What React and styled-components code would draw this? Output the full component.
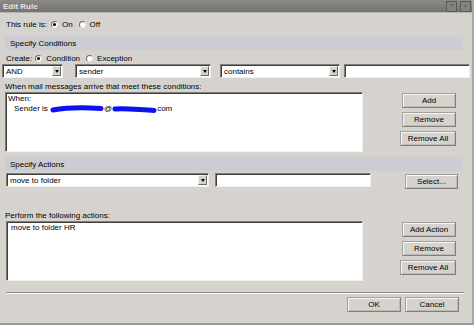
import React from "react";
import styled, { createGlobalStyle } from "styled-components";

const GlobalStyle = createGlobalStyle`
  html, body {
    margin: 0;
    padding: 0;
    background: #d6d3ce;
  }
  body {
    font-family: "Liberation Sans", Arial, sans-serif;
    font-size: 8px;
    color: #000;
  }
`;

const Window = styled.div`
  width: 474px;
  height: 325px;
  background: #d6d3ce;
  box-sizing: border-box;
  display: flex;
  flex-direction: column;
  overflow: hidden;
  border-bottom: 2px solid #9b9994;
  border-right: 2px solid #a9a7a2;
`;

const TitleBar = styled.div`
  height: 13px;
  box-sizing: border-box;
  background: linear-gradient(#8c8b88, #74736f);
  border-bottom: 1px solid #b5b3ae;
  display: flex;
  align-items: center;
  justify-content: space-between;
  padding: 0 1px 0 3px;
`;

const Title = styled.span`
  color: #e4e4e4;
  font-weight: bold;
  font-size: 8px;
`;

const TitleButtons = styled.div`
  display: flex;
  gap: 3px;
`;

const TitleButton = styled.div`
  width: 9px;
  height: 9px;
  border: 1px solid #5a5956;
  background: #85837f;
  display: flex;
  align-items: center;
  justify-content: center;
  color: #5a5956;
  font-size: 6px;
  line-height: 1;
`;

const Line = styled.div`
  display: flex;
  align-items: center;
  height: 10px;
  margin: ${(p) => p.$top}px 0 0 ${(p) => p.$left ?? 6}px;
  white-space: nowrap;
`;

const Option = styled.span`
  display: inline-flex;
  align-items: center;
  gap: 4px;
  margin-left: ${(p) => p.$gap}px;
`;

const Radio = styled.span`
  width: 7px;
  height: 7px;
  border-radius: 50%;
  background: #fff;
  box-sizing: border-box;
  border: 1px solid;
  border-color: #6b6a66 #e8e8e8 #e8e8e8 #6b6a66;
  display: inline-flex;
  align-items: center;
  justify-content: center;
  &::after {
    content: "";
    width: 3px;
    height: 3px;
    border-radius: 50%;
    background: ${(p) => (p.$checked ? "#000" : "transparent")};
  }
`;

const Band = styled.div`
  margin: ${(p) => p.$top}px 0 0 5px;
  width: 458px;
  height: 14px;
  background: #cbcdd2;
  display: flex;
  align-items: center;
  padding-left: 5px;
  box-sizing: border-box;
`;

const FieldRow = styled.div`
  display: flex;
  align-items: flex-start;
  height: ${(p) => p.$h ?? 14}px;
  margin-top: ${(p) => p.$top}px;
`;

const Field = styled.div`
  width: ${(p) => p.$w}px;
  height: 14px;
  margin-left: ${(p) => p.$ml}px;
  background: #fff;
  box-sizing: border-box;
  border: 1px solid;
  border-color: #7f7e7a #f2f1ee #f2f1ee #7f7e7a;
  box-shadow: inset 1px 1px 0 #3f3e3c;
  display: flex;
  align-items: center;
  padding-left: 3px;
  white-space: nowrap;
`;

const DropArrow = styled.span`
  margin-left: auto;
  margin-right: 1px;
  width: 9px;
  height: 10px;
  box-sizing: border-box;
  background: #d6d3ce;
  border: 1px solid;
  border-color: #f4f3f0 #6b6a66 #6b6a66 #f4f3f0;
  display: flex;
  align-items: center;
  justify-content: center;
  &::after {
    content: "";
    border-left: 2.5px solid transparent;
    border-right: 2.5px solid transparent;
    border-top: 3px solid #000;
  }
`;

const Label = styled.div`
  height: 10px;
  line-height: 10px;
  margin: ${(p) => p.$top}px 0 0 5px;
  white-space: nowrap;
`;

const ListRow = styled.div`
  display: flex;
  height: 60px;
`;

const ListBox = styled.div`
  width: ${(p) => p.$w}px;
  height: 60px;
  margin-left: ${(p) => p.$ml}px;
  box-sizing: border-box;
  background: #fff;
  border: 1px solid;
  border-color: #7f7e7a #f2f1ee #f2f1ee #7f7e7a;
  box-shadow: inset 1px 1px 0 #3f3e3c;
  padding: 1px 0 0 2px;
`;

const ListItem = styled.div`
  height: 10px;
  line-height: 10px;
  padding-left: ${(p) => p.$indent ?? 0}px;
  display: flex;
  align-items: center;
  white-space: nowrap;
`;

const ButtonColumn = styled.div`
  margin: 1px 16px 0 auto;
  display: flex;
  flex-direction: column;
  align-items: flex-end;
  gap: 4px;
`;

const Button = styled.button`
  width: ${(p) => p.$w ?? 54}px;
  height: 15px;
  margin-top: ${(p) => p.$top ?? 0}px;
  margin-left: ${(p) => p.$ml ?? 0}px;
  padding: 0;
  font: inherit;
  font-size: 8px;
  color: #000;
  background: #d6d3ce;
  box-sizing: border-box;
  border: 1px solid;
  border-color: #a3a19c #807e7a #807e7a #a3a19c;
  box-shadow: inset 1px 1px 0 #f7f6f3, inset -1px -1px 0 #bcbab5;
`;

const Separator = styled.div`
  margin: ${(p) => p.$top}px 0 0 6px;
  width: 458px;
  height: 0;
  border-top: 1px solid #8e8c88;
  border-bottom: 1px solid #fbfaf8;
`;

const Footer = styled.div`
  display: flex;
  justify-content: flex-end;
  gap: 4px;
  margin: 3px 13px 0 0;
`;

// blue marker strokes that hide the address in the reference
const Redact = ({ w, d }) => (
  <svg width={w} height="10" viewBox={`0 0 ${w} 10`} style={{ display: "block" }}>
    <path d={d} stroke="#0b12f2" strokeWidth="5" fill="none" strokeLinecap="round" />
  </svg>
);

export default function App() {
  return (
    <>
      <GlobalStyle />
      <Window>
        <TitleBar>
          <Title>Edit Rule</Title>
          <TitleButtons>
            <TitleButton>?</TitleButton>
            <TitleButton>×</TitleButton>
          </TitleButtons>
        </TitleBar>

        <Line $top={6}>
          This rule is:
          <Option $gap={4}>
            <Radio $checked />
            On
          </Option>
          <Option $gap={6}>
            <Radio />
            Off
          </Option>
        </Line>

        <Band $top={7}>Specify Conditions</Band>

        <Line $top={3}>
          Create:
          <Option $gap={3}>
            <Radio $checked />
            Condition
          </Option>
          <Option $gap={6}>
            <Radio />
            Exception
          </Option>
        </Line>

        <FieldRow $top={1}>
          <Field $w={61} $ml={2}>
            AND
            <DropArrow />
          </Field>
          <Field $w={136} $ml={12}>
            sender
            <DropArrow />
          </Field>
          <Field $w={120} $ml={9}>
            contains
            <DropArrow />
          </Field>
          <Field $w={126} $ml={4} />
        </FieldRow>

        <Label $top={4}>When mail messages arrive that meet these conditions:</Label>
        <ListRow>
          <ListBox $w={358} $ml={5}>
            <ListItem>When:</ListItem>
            <ListItem $indent={6}>
              Sender is&nbsp;
              <Redact w={54} d="M3 6 C 14 4, 30 3, 51 4.5" />
              @
              <Redact w={45} d="M3 5 C 14 4, 28 6, 42 6.5" />
              com
            </ListItem>
          </ListBox>
          <ButtonColumn>
            <Button>Add</Button>
            <Button>Remove</Button>
            <Button $w={56}>Remove All</Button>
          </ButtonColumn>
        </ListRow>

        <Band $top={5}>Specify Actions</Band>

        <FieldRow $top={2} $h={16}>
          <Field $w={203} $ml={6}>
            move to folder
            <DropArrow />
          </Field>
          <Field $w={156} $ml={6} />
          <Button $w={53} $top={1} $ml={34}>
            Select...
          </Button>
        </FieldRow>

        <Label $top={22}>Perform the following actions:</Label>
        <ListRow>
          <ListBox $w={357} $ml={6}>
            <ListItem $indent={2}>move to folder HR</ListItem>
          </ListBox>
          <ButtonColumn>
            <Button>Add Action</Button>
            <Button>Remove</Button>
            <Button $w={56}>Remove All</Button>
          </ButtonColumn>
        </ListRow>

        <Separator $top={11} />

        <Footer>
          <Button>OK</Button>
          <Button>Cancel</Button>
        </Footer>
      </Window>
    </>
  );
}
